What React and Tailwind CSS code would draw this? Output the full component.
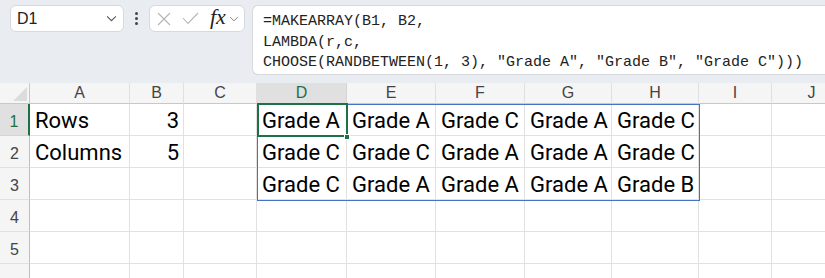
import React from "react";

const cols = [
  { l: "A", w: 100 },
  { l: "B", w: 54 },
  { l: "C", w: 73 },
  { l: "D", w: 90 },
  { l: "E", w: 89 },
  { l: "F", w: 89 },
  { l: "G", w: 87 },
  { l: "H", w: 87 },
  { l: "I", w: 73 },
  { l: "J", w: 80 },
];

const data = [
  ["Rows", "3", "", "Grade A", "Grade A", "Grade C", "Grade A", "Grade C", "", ""],
  ["Columns", "5", "", "Grade C", "Grade C", "Grade A", "Grade A", "Grade C", "", ""],
  ["", "", "", "Grade C", "Grade A", "Grade A", "Grade A", "Grade B", "", ""],
  ["", "", "", "", "", "", "", "", "", ""],
  ["", "", "", "", "", "", "", "", "", ""],
  ["", "", "", "", "", "", "", "", "", ""],
];

function Chevron({ className }) {
  return (
    <svg className={className} viewBox="0 0 12 8" fill="none" stroke="currentColor" strokeWidth="1.2">
      <path d="M1 1.5 L6 6.5 L11 1.5" />
    </svg>
  );
}

export default function App() {
  const gridCols = "30px " + cols.map((c) => c.w + "px").join(" ");
  return (
    <div className="w-[825px] h-[278px] overflow-hidden bg-white" style={{ fontFamily: "'Liberation Sans', Arial, sans-serif" }}>
      {/* toolbar */}
      <div className="h-[83px] bg-[#e9edf2] flex items-start pt-[5px] pl-[10px] gap-0">
        <div className="w-[114px] h-[27px] bg-white rounded-[6px] border border-[#d6d9dd] flex items-center justify-between pl-[6px] pr-[6px]">
          <span className="text-[16px] text-[#222]">D1</span>
          <Chevron className="w-[11px] h-[7px] text-[#555]" />
        </div>
        <div className="w-[25px] h-[27px] flex flex-col items-center justify-center gap-[2px]">
          <span className="w-[3px] h-[3px] bg-[#444] rounded-full" />
          <span className="w-[3px] h-[3px] bg-[#444] rounded-full" />
          <span className="w-[3px] h-[3px] bg-[#444] rounded-full" />
        </div>
        <div className="w-[96px] h-[27px] bg-white rounded-[6px] border border-[#d6d9dd] flex items-center pl-[7px] pr-[3px]">
          <svg className="w-[14px] h-[14px] text-[#b5b5b5]" viewBox="0 0 14 14" fill="none" stroke="currentColor" strokeWidth="1.1">
            <path d="M1 1 L13 13 M13 1 L1 13" />
          </svg>
          <svg className="w-[17px] h-[13px] ml-[11px] text-[#b5b5b5]" viewBox="0 0 17 13" fill="none" stroke="currentColor" strokeWidth="1.1">
            <path d="M1 6 L6 11.5 L16 1" />
          </svg>
          <span className="ml-[11px] text-[22px] leading-none italic text-[#222] mt-[-4px]" style={{ fontFamily: "'Liberation Serif', 'Times New Roman', serif" }}>fx</span>
          <Chevron className="ml-[3px] w-[10px] h-[6px] text-[#777]" />
        </div>
        <div className="ml-[7px] flex-1 h-[70px] bg-white rounded-l-[6px] border border-r-0 border-[#d6d9dd] pl-[10px] pt-[6px] text-[15px] leading-[20.5px] text-[#222] whitespace-pre" style={{ fontFamily: "'Liberation Mono', 'Courier New', monospace" }}>
          <div>=MAKEARRAY(B1, B2,</div>
          <div>LAMBDA(r,c,</div>
          <div>CHOOSE(RANDBETWEEN(1, 3), "Grade A", "Grade B", "Grade C")))</div>
        </div>
      </div>

      {/* grid */}
      <div className="relative">
        <div className="grid" style={{ gridTemplateColumns: gridCols }}>
          {/* header row */}
          <div className="relative h-[21px] bg-[#f5f5f5] border-b border-r border-[#c8c8c8]">
            <svg className="absolute right-[2px] bottom-[2px] w-[14px] h-[14px]" viewBox="0 0 14 14">
              <path d="M14 0 L14 14 L0 14 Z" fill="#dcdcdc" />
            </svg>
          </div>
          {cols.map((c) => (
            <div
              key={c.l}
              className={
                "h-[21px] flex items-center justify-center text-[16px] border-b border-r " +
                (c.l === "D"
                  ? "bg-[#e0e0e0] text-[#1e7145] border-b-[#c8c8c8] border-r-[#d4d4d4]"
                  : "bg-[#f5f5f5] text-[#444] border-b-[#c8c8c8] border-r-[#e0e0e0]")
              }
            >
              {c.l}
            </div>
          ))}
          {data.map((row, ri) => (
            <React.Fragment key={ri}>
              <div
                className={
                  "h-[32px] flex items-center justify-center text-[16px] pt-[5px] border-b " +
                  (ri === 0
                    ? "bg-[#e0e0e0] text-[#1e7145] border-r-2 border-r-[#1e7145] border-b-[#d4d4d4]"
                    : "bg-[#f5f5f5] text-[#444] border-r border-r-[#bdbdbd] border-b-[#e1e1e1]")
                }
              >
                {ri < 5 ? ri + 1 : ""}
              </div>
              {row.map((v, ci) => (
                <div
                  key={ci}
                  className={
                    "h-[32px] flex items-end pb-[1px] text-[22px] leading-[26px] text-black border-b border-r border-[#e1e1e1] whitespace-nowrap overflow-visible " +
                    (ci === 1 ? "justify-end pr-[4px]" : "pl-[5px]")
                  }
                  style={{ fontFamily: "Roboto, 'Liberation Sans', sans-serif" }}
                >
                  {v}
                </div>
              ))}
            </React.Fragment>
          ))}
        </div>
        {/* spill range border */}
        <div className="absolute left-[257px] top-[21px] w-[443px] h-[97px] border border-[#4472c4] pointer-events-none" />
        {/* active cell */}
        <div className="absolute left-[257px] top-[20px] w-[91px] h-[34px] border-2 border-[#1e7145] pointer-events-none" />
        <div className="absolute left-[344px] top-[51px] w-[6px] h-[6px] bg-[#1e7145] border border-white pointer-events-none" />
      </div>
    </div>
  );
}
